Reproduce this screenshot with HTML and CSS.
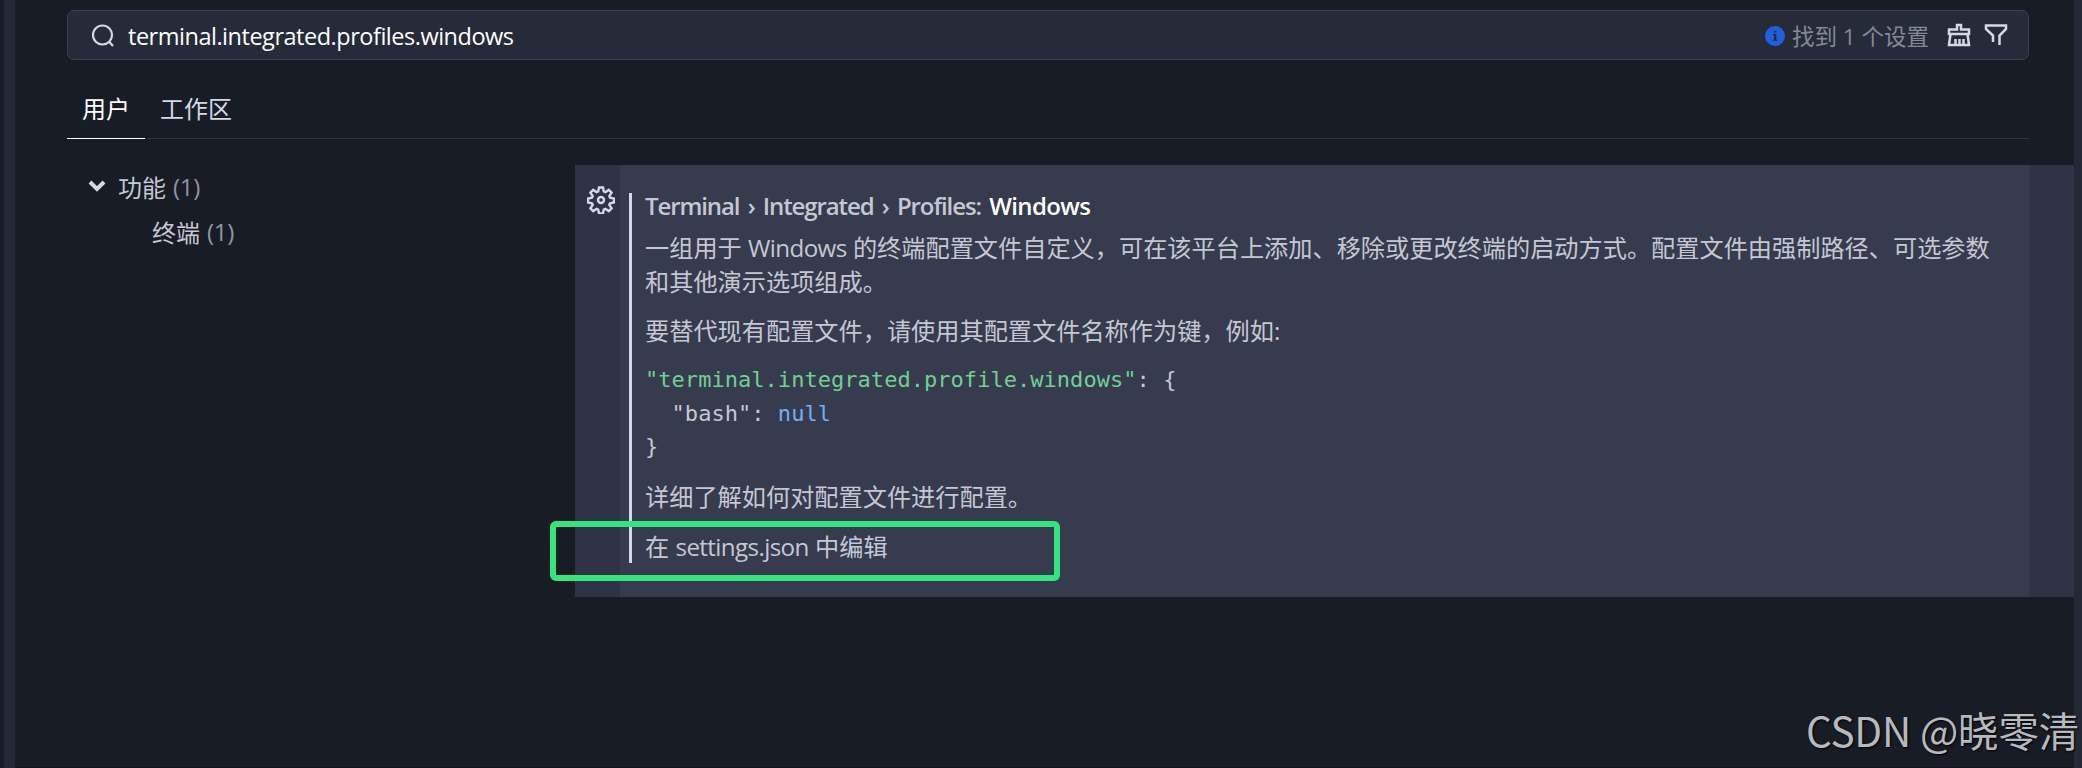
FILE: index.html
```
<!DOCTYPE html>
<html lang="zh-CN">
<head>
    <meta charset="UTF-8">
    <meta name="viewport" content="width=device-width, initial-scale=1.0">
    <title>设置</title>
    <link rel="stylesheet" href="styles.css">
</head>
<body>
    <div class="rail"></div>
    <main class="settings-editor">
        <header class="search-box">
            <svg class="search-icon" viewBox="0 0 24 24"><circle cx="11.5" cy="11" r="9.5"/><path d="M18 17.500l4 4.500"/></svg>
            <span class="query">terminal.integrated.profiles.windows</span>
            <div class="search-tools">
                <svg class="info-icon" viewBox="0 0 20 20"><circle cx="10" cy="10" r="10"/><path d="M9 4.500h2.400v2H9zM8 8h3.300v5.400H12.500v1.300H7.800v-1.300H9V9.300H8z"/></svg>
                <span class="count">找到 1 个设置</span>
                <svg class="tool-icon clear-icon" viewBox="0 0 24 24"><path d="M2 11V6.500h8V2h4v4.500h8V11zM3.500 11L2 22H22L20.500 11M8.500 16v6M12.500 16v6M16.500 16v6"/></svg>
                <svg class="tool-icon filter-icon" viewBox="0 0 24 24"><path d="M9 19v-6.500L2 6V2.500h20V6l-6.500 6.500V22"/></svg>
            </div>
        </header>
        <nav class="tabs">
            <span class="tab active">用户</span>
            <span class="tab">工作区</span>
        </nav>
        <div class="content">
            <aside class="tree">
                <div class="tree-row">
                    <svg class="chevron" viewBox="0 0 18 12"><path d="M2 2l7 7 7-7"/></svg>
                    <span class="label">功能</span><span class="num">(1)</span>
                </div>
                <div class="tree-row child">
                    <span class="label">终端</span><span class="num">(1)</span>
                </div>
            </aside>
            <section class="setting-row">
                <div class="gutter">
                    <svg class="gear" viewBox="0 0 28 28"><path d="M12 1.500h4l.8 4 1.600.7 3.400-2.300 2.800 2.800-2.300 3.400.7 1.600 4 .8v4l-4 .8-.7 1.600 2.300 3.400-2.800 2.800-3.400-2.300-1.600.7-.8 4h-4l-.8-4-1.600-.7-3.400 2.300-2.800-2.800 2.300-3.400-.7-1.600-4-.8v-4l4-.8.7-1.600-2.300-3.400 2.800-2.800 3.400 2.300 1.600-.7z"/><circle cx="14" cy="14" r="3"/></svg>
                </div>
                <div class="setting">
                    <div class="setting-body">
                        <h2 class="title"><span class="category">Terminal › Integrated › Profiles: </span><span class="name">Windows</span></h2>
                        <p class="line first">一组用于 <span class="latin">Windows</span> 的终端配置文件自定义，可在该平台上添加、移除或更改终端的启动方式。配置文件由强制路径、可选参数<br>和其他演示选项组成。</p>
                        <p class="line">要替代现有配置文件，请使用其配置文件名称作为键，例如:</p>
                        <div class="code">
                            <div><span class="string">"terminal.integrated.profile.windows"</span><span>: {</span></div>
                            <div><span>  "bash": </span><span class="null">null</span></div>
                            <div><span>}</span></div>
                        </div>
                        <p class="line">详细了解如何对配置文件进行配置。</p>
                        <p class="line edit">在 <span class="latin">settings.json</span> 中编辑</p>
                    </div>
                </div>
                <div class="highlight"></div>
            </section>
        </div>
    </main>
    <div class="rail-right"></div>
    <div class="watermark">CSDN @晓零清</div>
</body>
</html>
```
FILE: styles.css
```
* {
    box-sizing: border-box;
}

body {
    margin: 0;
    height: 768px;
    display: flex;
    overflow: hidden;
    background: #181c25;
    color: #c5c8d3;
    font-family: "Open Sans", "Noto Sans CJK SC", sans-serif;
    font-size: 24px;
}

svg {
    display: block;
    flex: none;
    fill: none;
    stroke: #d5d8e5;
}

.rail {
    width: 11px;
    margin-left: 4px;
    background: #242936;
}

.rail-right {
    width: 8px;
    background: #242936;
}

.settings-editor {
    flex: 1;
    padding: 10px 0 0 52px;
    border-bottom: 1px solid #12131d;
}

.search-box {
    width: 1962px;
    height: 50px;
    display: flex;
    align-items: center;
    padding: 0 20px 0 23px;
    background: #262b3a;
    border: 1px solid #3a3f52;
    border-radius: 7px;
}

.search-icon {
    width: 24px;
    height: 24px;
    margin-top: 2px;
    stroke-width: 2.200;
}

.query {
    margin-left: 13px;
    padding-top: 2px;
    color: #fff;
    font-size: 23.500px;
    letter-spacing: -0.480px;
}

.search-tools {
    margin-left: auto;
    display: flex;
    align-items: center;
}

.info-icon {
    width: 20px;
    height: 20px;
    margin-top: 2px;
    stroke: none;
}

.info-icon circle {
    fill: #2060df;
}

.info-icon path {
    fill: #262b3a;
}

.count {
    margin-left: 7px;
    color: #858997;
    font-size: 22.500px;
    white-space: nowrap;
}

.tool-icon {
    width: 24px;
    height: 24px;
    stroke-width: 2.500;
}

.clear-icon {
    margin-left: 18px;
}

.filter-icon {
    margin-left: 13px;
}

.tabs {
    width: 1962px;
    height: 79px;
    display: flex;
    align-items: flex-end;
    border-bottom: 1px solid #2e3241;
}

.tab {
    height: 57px;
    margin-bottom: -1px;
    padding: 0 15px;
    line-height: 54px;
    color: #d5d8e5;
}

.tab.active {
    width: 78px;
    color: #fff;
    border-bottom: 1px solid #fff;
}

.content {
    display: flex;
    padding-top: 26px;
}

.tree {
    width: 508px;
    margin-top: -1px;
}

.tree-row {
    height: 45px;
    display: flex;
    align-items: center;
    padding-left: 21px;
}

.tree-row.child {
    padding-left: 85px;
}

.chevron {
    width: 18px;
    height: 12px;
    margin: -1px 12px 0 0;
    stroke-width: 4;
}

.num {
    margin-left: 7px;
    color: #92959f;
    letter-spacing: -0.300px;
}

.setting-row {
    position: relative;
    width: 1499px;
    height: 432px;
    display: flex;
    background: #2e3346;
}

.gutter {
    width: 45px;
    padding: 21px 0 0 12px;
}

.gear {
    width: 28px;
    height: 28px;
    stroke-width: 2.400;
}

.setting {
    width: 1409px;
    padding: 28px 0 0 9px;
    background: #363b4e;
}

.setting-body {
    height: 370px;
    padding-left: 13px;
    border-left: 3px solid #d5d8e5;
    white-space: nowrap;
}

.title {
    margin: 0;
    height: 26px;
    line-height: 25px;
    font-size: 24px;
    font-weight: 600;
    letter-spacing: -0.620px;
}

.title .category {
    letter-spacing: -1.100px;
    word-spacing: 3.100px;
}

.title .name {
    color: #fff;
}

.latin {
    letter-spacing: -0.620px;
}

.line {
    margin: 0 0 15px;
    font-size: 24.200px;
    line-height: 34px;
}

.line.first {
    margin-top: 12px;
}

.line.edit {
    margin-top: 16px;
}

.code {
    margin: 0 0 16px;
    font-family: "DejaVu Sans Mono", monospace;
    font-size: 22px;
    line-height: 33.500px;
    letter-spacing: 0.040px;
}

.code span {
    white-space: pre;
}

.code .string {
    color: #72cf94;
}

.code .null {
    color: #75adf5;
}

/* green frame drawn around the edit link */
.highlight {
    position: absolute;
    left: -25px;
    top: 356px;
    width: 510px;
    height: 60px;
    border: 6px solid #36e47f;
    border-radius: 6px;
}

.watermark {
    position: absolute;
    right: 3px;
    bottom: 8px;
    color: #b8b9bc;
    font-family: "Noto Sans CJK SC", sans-serif;
    font-size: 40.500px;
    line-height: 60px;
    letter-spacing: -0.200px;
    text-shadow: 1px 1px 2px #000;
}
```
